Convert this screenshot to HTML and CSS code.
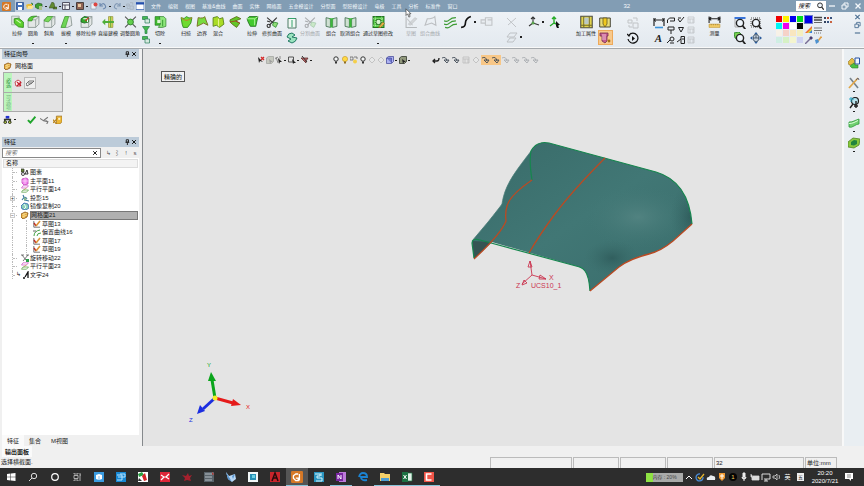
FILE: index.html
```html
<!DOCTYPE html>
<html lang="zh-CN">
<head>
<meta charset="utf-8">
<title>32</title>
<link rel="stylesheet" href="styles.css">
</head>
<body>
<svg class="defs" aria-hidden="true">
  <symbol id="cube" viewBox="0 0 12 12"><path d="M1 4l3-3h7v7l-3 3H1z" fill="#e3e7e6" stroke="#7c8a86" stroke-width=".7"/><path d="M1 4h7v7M8 4l3-3" fill="none" stroke="#7c8a86" stroke-width=".6"/></symbol>
  <symbol id="extrude" viewBox="0 0 12 12"><path d="M.6.6h7v8h-7z" fill="#dfe5e2" stroke="#93a39b" stroke-width=".7"/><path d="M3 3l4-.5L11.4 6v5L7 10.5 3 7z" fill="#5fd12f" stroke="#2c8b1b" stroke-width=".8"/><path d="M5 4l4 3" stroke="#d6ffc0"/></symbol>
  <symbol id="fillet" viewBox="0 0 12 12"><use href="#cube"/><path d="M1 5q0-4 5-4.400l3 0Q5 1 4.500 5z" fill="#57cd38" stroke="#2c8b1b" stroke-width=".6"/></symbol>
  <symbol id="chamfer" viewBox="0 0 12 12"><use href="#cube"/><path d="M1 5l3-4h5L5 6z" fill="#7ad85c" stroke="#3a9a2a" stroke-width=".6"/></symbol>
  <symbol id="draft" viewBox="0 0 12 12"><path d="M5 1h5l1 8-4 2H1z" fill="#e3e7e6" stroke="#7c8a86" stroke-width=".7"/><path d="M4.500 1H8L5 11H1z" fill="#6fd557" stroke="#3a9a2a" stroke-width=".6"/></symbol>
  <symbol id="remove" viewBox="0 0 12 12"><use href="#cube"/><path d="M1 3l3-2 4 1v4L4 7 1 6z" fill="#34a82c" stroke="#175f17" stroke-width=".7"/><path d="M3 3h4v3" stroke="#fff" fill="none"/><path d="M5 5l3-3" stroke="#cf2d23"/></symbol>
  <symbol id="direct" viewBox="0 0 12 12"><path d="M6 1h4v10H6z" fill="#d9d85a" stroke="#8c8b35" stroke-width=".6"/><path d="M0 6l3-3v2h8v2H3v2z" fill="#4fae39"/><path d="M8 1v10" stroke="#55a33a" stroke-width=".8"/></symbol>
  <symbol id="adjust" viewBox="0 0 12 12"><path d="M1 1l3 3M11 1L8 4M1 11l3-3M11 11L8 8" stroke="#555" stroke-width="1"/><circle cx="6" cy="6" r="2.700" fill="#63d04d" stroke="#2c7a28" stroke-width=".8"/></symbol>
  <symbol id="mini" viewBox="0 0 8 8"><path d="M.5.5h5v3h-5z" fill="#48b853" stroke="#238047" stroke-width=".7"/><path d="M3 3h4.500v4H3z" fill="#d5e9df" stroke="#287e5a" stroke-width=".7"/></symbol>
  <symbol id="funnel" viewBox="0 0 8 8"><path d="M.5.5h7L5 4v3.500H3V4z" fill="#45ba50" stroke="#238047" stroke-width=".7"/></symbol>
  <symbol id="cut" viewBox="0 0 12 12"><path d="M1 1h4l2 1v4l-2 3H1z" fill="#3fb92e" stroke="#247623" stroke-width=".6"/><path d="M5 1h4l2 2v7L8 11H4l2-3z" fill="#8ee67c" stroke="#247623" stroke-width=".6"/><path d="M3 4h3v3H3z" fill="#ddf4d6"/><path d="M8 4v6" stroke="#2c932a" stroke-width=".8"/></symbol>
  <symbol id="sweep" viewBox="0 0 12 12"><path d="M1 2q3 2 5-1 2 2 5 1l-1 5-3 4H3L2 8z" fill="#6edb30" stroke="#2c8b1b" stroke-width=".8"/><path d="M1 2q5 5 10 0" fill="none" stroke="#b58a2a"/></symbol>
  <symbol id="bound" viewBox="0 0 12 12"><path d="M2 2q5 1 6-1l3 8-4-2-6 3z" fill="#78dc3f" stroke="#7b7428" stroke-width=".9"/></symbol>
  <symbol id="blend" viewBox="0 0 12 12"><path d="M1 2l4-1 2 2 3-1 1 6-4 3-3-2-3 1z" fill="#a9dc25" stroke="#567e1c" stroke-width=".8"/><path d="M6 3v7" stroke="#e9f48b"/></symbol>
  <symbol id="ribbon" viewBox="0 0 12 12"><path d="M1 4l6-3 4 2-5 2 4 2-3 4-4-3L1 6z" fill="#63c628" stroke="#5c6d1a" stroke-width=".8"/><path d="M1 6l5-1 4 2" stroke="#b32d1d" stroke-width=".7" fill="none"/></symbol>
  <symbol id="bucket" viewBox="0 0 12 12"><path d="M1 3l2-2h8l-2 9H4L2 6z" fill="#43ca2e" stroke="#23731e" stroke-width=".8"/><path d="M1 3h7l3-2M8 3v6" stroke="#bdf8a8" fill="none" stroke-width=".8"/></symbol>
  <symbol id="scissors" viewBox="0 0 12 12"><path d="M1 2l7 6M10 2L3 9M1 5l3 1" stroke="#333" fill="none"/><circle cx="2.500" cy="9.500" r="1.500" fill="none" stroke="#333"/><path d="M7 6l4 1-2 4-3-2z" fill="#8edc77" stroke="#26862b" stroke-width=".7"/></symbol>
  <symbol id="book" viewBox="0 0 12 12"><path d="M1 2l4 1v8l-4-1zM11 2L7 3v8l4-1z" fill="#cfe0d3" stroke="#467153" stroke-width=".8"/><path d="M4 3h1.500v8M8 3H6.500v8" fill="none" stroke="#3cb83b"/></symbol>
  <symbol id="sheet" viewBox="0 0 12 12"><path d="M2 1.500h8v9.500H2z" fill="#f1f8f4" stroke="#4d7b65"/><path d="M3 1.500h6M6 3v7" stroke="#34a46a"/></symbol>
  <symbol id="swirl" viewBox="0 0 12 12"><path d="M1 5q1-4 5-4l3 2-3 2 5 1q-1 4-5 5L2 9l3-2z" fill="#9be4c0" stroke="#237a64"/></symbol>
  <symbol id="modify" viewBox="0 0 12 12"><path d="M1 1h10v10H1z" fill="#55cf42" stroke="#21741f"/><circle cx="6" cy="6" r="2.500" fill="#d9f3cf" stroke="#23751d"/><path d="M3 1v10M9 1v10M1 3h10M1 9h10" stroke="#e8ffe0" stroke-width=".6" stroke-dasharray="1"/><path d="M6 11l4-5 1.500 1.500L8 11z" fill="#e9b445" stroke="#885c20" stroke-width=".5"/></symbol>
  <symbol id="sketch" viewBox="0 0 12 12"><path d="M1 1v10h10" fill="none" stroke="#555"/><path d="M3 8l6-6 2 1-6 6z" fill="#aaa" stroke="#555" stroke-width=".5"/><path d="M2 3l5 6" stroke="#777"/></symbol>
  <symbol id="outline" viewBox="0 0 12 12"><path d="M1 9l2-6q5 0 7-2l1 8-4-2z" fill="none" stroke="#666"/></symbol>
  <symbol id="strokes" viewBox="0 0 12 12"><path d="M0 5q3 1 5-1t6-2M0 8q3 1 5-1t6-2M1 11q3 1 5-1t6-2" fill="none" stroke="#3d9b34" stroke-width="1.100"/></symbol>
  <symbol id="scurve" viewBox="0 0 12 12"><path d="M1 11q4 0 4-4t5-6" fill="none" stroke="#111" stroke-width="1.500"/></symbol>
  <symbol id="boxes" viewBox="0 0 12 12"><path d="M1 4h4v3H1zM5 2h6v7H5zM7 4h4" fill="#e7eaed" stroke="#777"/></symbol>
  <symbol id="axis" viewBox="0 0 12 12"><path d="M5 1v6l-4 3M5 7l6 2M3 3l2-2 2 2" fill="none" stroke="#333" stroke-width="1.100"/><circle cx="5" cy="7" r="1.500" fill="#59a34c"/></symbol>
  <symbol id="axisgo" viewBox="0 0 12 12"><path d="M5 1v6l-4 3M5 7l5 2M3 3l2-2 2 2" fill="none" stroke="#27aa28" stroke-width="1.400"/><path d="M7 5l4 4H9l1 3-2 0-1-2z" fill="#111"/></symbol>
  <symbol id="cross" viewBox="0 0 12 12"><path d="M1 2l9 9M10 2L2 9" stroke="#777"/></symbol>
  <symbol id="planes" viewBox="0 0 12 12"><path d="M4 2h7L8 6H1zM4 7h6l-3 4H1z" fill="none" stroke="#777"/></symbol>
  <symbol id="stock" viewBox="0 0 12 12"><path d="M.7.700h10.600v10.600H.7z" fill="#e1d34c" stroke="#4d4d42"/><path d="M3.500 1v10M8.500 1v10M1 9h10" stroke="#716a2b"/><path d="M4 2h4v6H4z" fill="#bac8c5"/></symbol>
  <symbol id="mill" viewBox="0 0 12 12"><path d="M.7 1h10.600v9H.7z" fill="#e7dc78" stroke="#4a493c"/><path d="M4 1h4v6L6 10 4 7z" fill="#f0c91e" stroke="#665820" stroke-width=".8"/></symbol>
  <symbol id="drill" viewBox="0 0 12 12"><path d="M1 1h8v3H8v5l-2 2-3-2V4H1z" fill="#c55b8d" stroke="#743151" stroke-width=".8"/><path d="M4 2v6M6 2v6" stroke="#f3bfd6"/><circle cx="10" cy="9" r="1.400" fill="#a76e13"/></symbol>
  <symbol id="history" viewBox="0 0 12 12"><path d="M2 3a5 5 0 1 1-1 4M0 2l2 2 2-3" fill="none" stroke="#111" stroke-width="1.200"/><path d="M5 4l3 2.500L5 9z" fill="#111"/></symbol>
  <symbol id="replace" viewBox="0 0 12 12"><path d="M1 3h4v3H1zM6 6h5v5H6zM6 1h4v3M2 8v2h3" fill="none" stroke="#777"/></symbol>
  <symbol id="dim" viewBox="0 0 12 12"><path d="M1 1v8M11 1v8" stroke="#222" stroke-width="1.200"/><path d="M1 3h10M3 1.500L1 3l2 1.500M9 1.500L11 3 9 4.500" fill="none" stroke="#222"/><path d="M2 10.500h8" stroke="#3c94db" stroke-width="1.600"/></symbol>
  <symbol id="measure" viewBox="0 0 12 12"><path d="M1 1v6M11 1v6M1 3h10M3 1.500L1 3l2 1.500M9 1.500L11 3 9 4.500" fill="none" stroke="#222"/><path d="M1 8h10v3H1z" fill="#f3cc68" stroke="#b88b20" stroke-width=".5"/><path d="M3 8v1M5 8v1M7 8v1M9 8v1" stroke="#876519" stroke-width=".5"/></symbol>
  <symbol id="note" viewBox="0 0 8 8"><path d="M.5 7V4l2-2h5v3H3" fill="none" stroke="#222"/></symbol>
  <symbol id="check" viewBox="0 0 8 8"><path d="M1 3l2 3 4-5M1 2h3" fill="none" stroke="#222"/></symbol>
  <symbol id="balloon" viewBox="0 0 8 8"><path d="M1 1h6v3H1zM4 4v4" fill="none" stroke="#222"/></symbol>
  <symbol id="tri" viewBox="0 0 8 8"><path d="M1.500 1.500h5L4 6z" fill="none" stroke="#222"/></symbol>
  <symbol id="leader" viewBox="0 0 8 8"><circle cx="5" cy="3" r="2" fill="none" stroke="#222"/><path d="M0 7l3-3M3 7h4" stroke="#222"/></symbol>
  <symbol id="tag" viewBox="0 0 8 8"><path d="M4 .5h3.500v7H4zM0 6l4-3M5 3h2" fill="none" stroke="#222"/></symbol>
  <symbol id="grid" viewBox="0 0 8 8"><path d="M1 1h6v6H1zM1 3h6M3 3v4M6 3v4" fill="none" stroke="#777" stroke-width=".8"/></symbol>
  <symbol id="lens" viewBox="0 0 12 12"><circle cx="6" cy="5" r="3.600" fill="#eef5fc" stroke="#222" stroke-width="1.400"/><path d="M8.500 7.500l3 4" stroke="#222" stroke-width="1.800"/></symbol>
  <symbol id="zoomfit" viewBox="0 0 12 12"><path d="M.5 1h11" stroke="#2566d6" stroke-width="1.800"/><path d="M1 2v8h4" fill="none" stroke="#aaa"/><use href="#lens" y="1"/></symbol>
  <symbol id="zoomwin" viewBox="0 0 12 12"><path d="M1 1h9v9H1z" fill="none" stroke="#555" stroke-dasharray="1"/><use href="#lens" y="1"/></symbol>
  <symbol id="zoomgreen" viewBox="0 0 12 12"><path d="M0 1l5-1 3 3-2 5-5-2z" fill="#7cd153" stroke="#369331"/><use href="#lens" y="1"/></symbol>
  <symbol id="pan" viewBox="0 0 12 12"><path d="M6 0l2 2.500H4zM6 12l2-2.500H4zM0 6l2.500-2v4zM12 6L9.500 4v4z" fill="#285a9b"/><rect x="3.500" y="2.500" width="5" height="7" rx="2" fill="#c5d0dc" stroke="#34475b" stroke-width=".8"/><path d="M6 3v3M4 6h4" stroke="#34475b" stroke-width=".8"/></symbol>
  <symbol id="lines" viewBox="0 0 8 8"><path d="M0 1.500h8M0 4h8" stroke="#444" stroke-width="1.500"/><path d="M0 6.500h8" stroke="#666"/></symbol>
  <symbol id="dashes" viewBox="0 0 8 8"><path d="M0 2h8M0 4.500h8" stroke="#777"/><path d="M0 7h8" stroke="#777" stroke-dasharray="1"/></symbol>
  <symbol id="brush" viewBox="0 0 8 8"><path d="M7.500.5L4 5" stroke="#e2a045" stroke-width="1.600"/><path d="M1 4l3-1 1 3-3 2z" fill="#4c91cf"/></symbol>
  <symbol id="colors" viewBox="0 0 8 8"><path d="M0 1h2v2H0zM0 5h2v2H0z" fill="#33435f"/><path d="M3 1h2v2H3z" fill="#b94a33"/><path d="M6 1h2v2H6z" fill="#39527d"/><path d="M3 5h2v2H3z" fill="#39527d"/><path d="M6 5h2v2H6z" fill="#c86442"/></symbol>
  <symbol id="rainbow" viewBox="0 0 8 8"><path d="M0 7L7 0v7z" fill="#ed6b37"/><path d="M2 7l5-5v5z" fill="#e7d43b"/><path d="M4 7l3-3v3z" fill="#3884de"/></symbol>
  <symbol id="pick" viewBox="0 0 8 8"><path d="M0 8l5-5" stroke="#776c94" stroke-width="1.400"/><path d="M4 2l2-2 2 2-2 2z" fill="#4a3e70"/></symbol>
  <symbol id="logo" viewBox="0 0 10 10"><rect width="10" height="10" rx="1" fill="#d57826"/><path d="M6 2.500H4L2 4v2l2 2h2V6H4M7 2.500V8" fill="none" stroke="#fff" stroke-width="1.100"/></symbol>
  <symbol id="save" viewBox="0 0 8 8"><path d="M.5.500h7v7h-7z" fill="#4573bc" stroke="#234786" stroke-width=".7"/><path d="M2 1h4v2H2zM2 5h4v3H2z" fill="#fff"/></symbol>
  <symbol id="open" viewBox="0 0 8 8"><path d="M0 3l2-1h4v5H1z" fill="#eabc3d"/><path d="M2 4h6L6 7H1z" fill="#ffe38b"/><path d="M5 1l2 1-1 1" stroke="#377e34" fill="none"/></symbol>
  <symbol id="part" viewBox="0 0 8 8"><path d="M0 3l3-2 4 1v3L3 7 0 5z" fill="#3e9f2f" stroke="#254d20" stroke-width=".6"/><path d="M4 4h3v4H4z" fill="#aac28c"/></symbol>
  <symbol id="cone" viewBox="0 0 8 8"><path d="M3 0l2 1 1 5H0zM5 5h3v2H4z" fill="#618a31" stroke="#34491e" stroke-width=".5"/></symbol>
  <symbol id="sheetmini" viewBox="0 0 8 8"><path d="M.5.500h7v7h-7zM.5 3h7M3 3v4" fill="#eef2f5" stroke="#445" stroke-width=".9"/></symbol>
  <symbol id="machine" viewBox="0 0 8 8"><path d="M.5.500h7v7h-7z" fill="#8f6354" stroke="#49413f"/><path d="M2 2h3v3H2z" fill="#e8c9a0"/></symbol>
  <symbol id="undo" viewBox="0 0 8 8"><path d="M1 1v3h3M1 4q3-4 5-1t-2 4" fill="none" stroke="#6d89ae" stroke-width="1.200"/></symbol>
  <symbol id="redo" viewBox="0 0 8 8"><path d="M7 1v3H4M7 4Q4 0 2 3t2 4" fill="none" stroke="#8299b5" stroke-width="1.200"/></symbol>
  <symbol id="docred" viewBox="0 0 8 8"><path d="M1 1h5v6H1z" fill="#edf1f5" stroke="#8796a8" stroke-width=".6"/><circle cx="5.500" cy="2.500" r="2" fill="#dd4440"/></symbol>
  <symbol id="window" viewBox="0 0 8 8"><path d="M0 .5h8v7H0z" fill="#fff" stroke="#2e5bae" stroke-width=".7"/><path d="M0 1.500h8" stroke="#234ead" stroke-width="2"/></symbol>
  <symbol id="min" viewBox="0 0 8 8"><path d="M1 4h6" stroke="currentColor" stroke-width="1.300"/></symbol>
  <symbol id="restore" viewBox="0 0 8 8"><path d="M1 3h4v4H1zM3 3V1h4v4H5" fill="none" stroke="currentColor"/></symbol>
  <symbol id="x" viewBox="0 0 8 8"><path d="M1.500 1.500l5 5M6.500 1.500l-5 5" stroke="currentColor" stroke-width="1.300"/></symbol>
  <symbol id="pin" viewBox="0 0 8 8"><path d="M3 1h3v3H3zM2 4.500h5M4.500 5v3" fill="none" stroke="#222" stroke-width="1.300"/></symbol>
  <symbol id="mesh" viewBox="0 0 8 8"><path d="M0 3l4-2 3 1-1 4-4 2-2-2z" fill="#e2a539" stroke="#8c5818" stroke-width=".8"/><path d="M1 4l5-2M1 6l5-2M3 2v5" stroke="#fff0ac" stroke-width=".6"/></symbol>
  <symbol id="redmesh" viewBox="0 0 8 8"><path d="M1 3l3-2 3 2-1 4H2z" fill="#fff" stroke="#b8252f" stroke-width=".8"/><path d="M3 3l4 4M7 3L3 7" stroke="#c5202f" stroke-width="1.200"/></symbol>
  <symbol id="face" viewBox="0 0 8 8"><path d="M0 5l3-3h5L6 4 1 7z" fill="#eee" stroke="#555" stroke-width=".8"/><path d="M2 4h4" stroke="#555" stroke-width=".8"/></symbol>
  <symbol id="bino" viewBox="0 0 10 10"><path d="M3 1h4v3H3z" fill="#2432cf"/><path d="M1 5h8M2 5v3M8 5v3" stroke="#30352a" stroke-width="1.500"/><circle cx="2.500" cy="8" r="1.500" fill="#b7cf44" stroke="#222"/><circle cx="7.500" cy="8" r="1.500" fill="#b7cf44" stroke="#222"/></symbol>
  <symbol id="ok" viewBox="0 0 8 8"><path d="M.8 4.500L3 6.700 7.500 1.500" fill="none" stroke="#20a52c" stroke-width="1.700"/></symbol>
  <symbol id="branch" viewBox="0 0 8 8"><path d="M0 3l3 2 4-3M3 5l4 1M5 5l2 1-1 2" fill="none" stroke="#777"/></symbol>
  <symbol id="exit" viewBox="0 0 8 8"><path d="M3 1h5v5l-2 2H3z" fill="#eeb835" stroke="#9f721d" stroke-width=".7"/><path d="M0 4l3 4M4 3L0 7" stroke="#b98218"/><circle cx="5.500" cy="3.500" r="1" fill="#fff3c4"/></symbol>
  <symbol id="set" viewBox="0 0 8 8"><path d="M0 1h3v3H0z" fill="#658330" stroke="#333" stroke-width=".7"/><circle cx="2" cy="6" r="1.500" fill="#fff" stroke="#222" stroke-width=".8"/><path d="M4 6l2-4 1 4H4" fill="none" stroke="#222" stroke-width=".9"/></symbol>
  <symbol id="toggle" viewBox="0 0 8 8"><path d="M0 1h3v3H0zM4 1h3v2" fill="none" stroke="#666" stroke-width=".8"/><circle cx="5" cy="5.500" r="2" fill="#f4cf4a"/></symbol>
  <symbol id="pink" viewBox="0 0 8 8"><path d="M1 2l4-1 2 1v5l-4 1-2-2z" fill="#f189ed" stroke="#c440bd" stroke-width=".8"/><path d="M1 4h6M4 1v6" stroke="#ffe2ff" stroke-width=".6"/></symbol>
  <symbol id="parallel" viewBox="0 0 8 8"><path d="M2 .8h5.500L5.500 3H.5z" fill="none" stroke="#d25fcb" stroke-width=".8"/><path d="M5.500 3l-3 2" stroke="#c9a34d" stroke-width=".8"/><path d="M2 5h5.500l-2 2.200h-5z" fill="none" stroke="#61a44f" stroke-width=".8"/></symbol>
  <symbol id="project" viewBox="0 0 8 8"><path d="M2 1l2 5 4 1M1 6q3-5 5-1" fill="none" stroke="#38789e" stroke-width="1.100"/><path d="M3 3l3 2-3 2z" fill="#84b48b"/></symbol>
  <symbol id="mirror" viewBox="0 0 8 8"><path d="M0 4l3-3 4 1 1 4-3 2-4-1z" fill="#8ad0b8" stroke="#2862b1" stroke-width=".8"/><path d="M3 2l2 3-2 2" stroke="#f0fbff" fill="none"/></symbol>
  <symbol id="skt" viewBox="0 0 8 8"><path d="M.8 1v6.200H7" fill="none" stroke="#555" stroke-width=".8"/><path d="M1 3l2 3" stroke="#bd2f25" stroke-width="1.400"/><path d="M3 6l4-5" stroke="#dc9437" stroke-width="1.600"/></symbol>
  <symbol id="offset" viewBox="0 0 8 8"><path d="M1 8q0-5 6-6M4 8q0-3 4-3" fill="none" stroke="#43a246"/><path d="M0 3h3" stroke="#666"/></symbol>
  <symbol id="rotate" viewBox="0 0 8 8"><path d="M0 1h3M1 1l4 5M7 1L2 7M5 1h3" stroke="#555" stroke-width=".8"/><path d="M5 5h3v3H5z" fill="#289d48"/></symbol>
  <symbol id="text" viewBox="0 0 8 8"><path d="M2 7h2M7 7V1L4 6" fill="none" stroke="#111" stroke-width="1.300"/></symbol>
  <symbol id="pick2" viewBox="0 0 8 8"><path d="M1 1l1 6 1-2 3 1z" fill="#222"/><path d="M4 1l3 3M7 1L4 4" stroke="#d62828" stroke-width="1.300"/></symbol>
  <symbol id="chain" viewBox="0 0 8 8"><path d="M0 3l3-2M1 1l2 6M5 0v3" stroke="#888" fill="none"/><path d="M3 2l4 4H5L4 8z" fill="#222"/></symbol>
  <symbol id="select" viewBox="0 0 8 8"><path d="M.5 1h5v5h-5z" fill="none" stroke="#444" stroke-width=".9"/><path d="M4 3l4 4H6l-1 1z" fill="#222"/></symbol>
  <symbol id="filter" viewBox="0 0 8 8"><path d="M0 2h7L5 5v2L3 5z" fill="#b66" stroke="#522" stroke-width=".7"/><path d="M1 0l5 6" stroke="#333"/></symbol>
  <symbol id="bulb" viewBox="0 0 8 8"><circle cx="4" cy="3" r="2.200" fill="#f3f5f5" stroke="#333"/><path d="M3 5.500h2v2H3z" fill="#333"/></symbol>
  <symbol id="bulbon" viewBox="0 0 8 8"><circle cx="4" cy="3" r="2.600" fill="#ffda45" stroke="#c49421" stroke-width=".6"/><path d="M3 5.500h2v2H3z" fill="#906f23"/></symbol>
  <symbol id="purplecube" viewBox="0 0 8 8"><path d="M.5 2l2-1.500h5v5l-2 2h-5z" fill="#aeb3f1" stroke="#3b3f93" stroke-width=".7"/><path d="M.5 2h5v5" fill="#7077cf" stroke="#3b3f93" stroke-width=".6"/></symbol>
  <symbol id="graycube" viewBox="0 0 8 8"><path d="M.5 2l2-1.500h5v5l-2 2h-5z" fill="#91987c" stroke="#32382d" stroke-width=".8"/><path d="M3 3l4 3H5L4 8z" fill="#222"/></symbol>
  <symbol id="back" viewBox="0 0 8 8"><path d="M1 5h4q2 0 2-3M3 3L1 5l2 2" fill="none" stroke="#222" stroke-width="1.300"/></symbol>
  <symbol id="snap" viewBox="0 0 8 8"><path d="M0 2q4-2 5 3M2 4h5L5 7z" fill="none" stroke="#3f4955" stroke-width=".9"/></symbol>
  <symbol id="diamond" viewBox="0 0 8 8"><path d="M4 1l3 3-3 3-3-3z" fill="#eef0f1" stroke="#888"/></symbol>
  <symbol id="home" viewBox="0 0 12 12"><path d="M0 5l4-4 3 3v4H1z" fill="#e0bd45" stroke="#937120" stroke-width=".6"/><path d="M7 1h4.500v6H7z" fill="#edf4ff" stroke="#2752a2"/><path d="M2 9l4-3 1 2h3v3H4z" fill="#4ac044" stroke="#2c812b" stroke-width=".6"/></symbol>
  <symbol id="tools" viewBox="0 0 12 12"><path d="M2 1l8 10" stroke="#76828b" stroke-width="1.600"/><path d="M10 1L1 11" stroke="#e0a64a" stroke-width="1.800"/><path d="M8 3l2-2 1 2" stroke="#667" fill="none"/></symbol>
  <symbol id="inspect" viewBox="0 0 12 12"><circle cx="7" cy="4" r="3.500" fill="#b8e4ef" stroke="#222" stroke-width="1.200"/><path d="M5 7l-3 4M8 4v7M6 9h4" stroke="#222" stroke-width="1.400"/><path d="M1 2h5M3 0v5" stroke="#2eabc9"/></symbol>
  <symbol id="slab" viewBox="0 0 12 12"><path d="M1 5q3 0 5-1t5-2v5q-2 0-5 2t-5 1z" fill="#70cf71" stroke="#2f9d3a" stroke-width=".8"/><path d="M1 6.500q3 0 5-1t4-2" fill="none" stroke="#dbffd9"/></symbol>
  <symbol id="slab2" viewBox="0 0 12 12"><path d="M0 5l5-4 7 1-1 6-5 3-6-1z" fill="#88c83d" stroke="#4f8424" stroke-width=".8"/><path d="M3 5l3-2 3 .5V7L6 8.500 3 8z" fill="#20843d"/></symbol>
</svg>

<header class="titlebar">
  <svg class="logo"><use href="#logo"/></svg>
  <div class="quick">
    <button aria-label="保存"><svg><use href="#save"/></svg></button><button aria-label="打开"><svg><use href="#open"/></svg></button>
    <button class="more" aria-label="零件"><svg><use href="#part"/></svg></button><button class="more" aria-label="装配"><svg><use href="#cone"/></svg></button>
    <button class="more" aria-label="工程图"><svg><use href="#sheetmini"/></svg></button><button class="more" aria-label="加工"><svg><use href="#machine"/></svg></button>
    <button aria-label="关闭文件"><svg><use href="#docred"/></svg></button><button class="more" aria-label="撤销"><svg><use href="#undo"/></svg></button>
    <button class="more" aria-label="重做"><svg><use href="#redo"/></svg></button><button aria-label="复制"><svg class="off"><use href="#replace"/></svg></button><button aria-label="窗口布局"><svg><use href="#window"/></svg></button>
  </div>
  <nav class="menu"><button>文件</button><button>编辑</button><button>视图</button><button>基准&amp;曲线</button><button>曲面</button><button>实体</button><button>网格面</button><button>五金模设计</button><button>分型面</button><button>型腔模设计</button><button>电极</button><button>工具</button><button class="hover">分析<svg class="cursor" viewBox="0 0 8 12"><path d="M1 1v8l2-2 1.500 4 1.500-1-1.500-3H7z" fill="#fff" stroke="#333" stroke-width=".8"/></svg></button><button>标准件</button><button>窗口</button></nav>
  <div class="doc">32</div>
  <label class="find"><input type="text" value="搜索" aria-label="搜索"><svg><use href="#lens"/></svg></label>
  <div class="winbtns"><button aria-label="最小化"><svg><use href="#min"/></svg></button><button aria-label="还原"><svg><use href="#restore"/></svg></button><button aria-label="关闭"><svg><use href="#x"/></svg></button></div>
</header>

<div class="ribbon">
  <section class="group g1"><i class="grip"></i>
    <button class="tool"><svg><use href="#extrude"/></svg>拉伸</button>
    <button class="tool drop"><svg><use href="#fillet"/></svg>圆角</button>
    <button class="tool"><svg><use href="#chamfer"/></svg>斜角</button>
    <button class="tool drop"><svg><use href="#draft"/></svg>拔模</button>
    <button class="tool"><svg><use href="#remove"/></svg>移除拉伸</button>
    <button class="tool"><svg><use href="#direct"/></svg>直接建模</button>
    <button class="tool"><svg><use href="#adjust"/></svg>调整圆角</button>
    <div class="stack mini"><button aria-label="合并"><svg><use href="#mini"/></svg></button><button aria-label="过滤"><svg><use href="#funnel"/></svg></button><button aria-label="复制实体"><svg><use href="#mini"/></svg></button></div>
    <button class="tool drop"><svg><use href="#cut"/></svg>切除</button>
  </section>
  <section class="group g2"><i class="grip"></i>
    <button class="tool"><svg><use href="#sweep"/></svg>扫掠</button>
    <button class="tool"><svg><use href="#bound"/></svg>边界</button>
    <button class="tool"><svg><use href="#blend"/></svg>混合</button>
    <button class="tool" aria-label="曲面"><svg><use href="#ribbon"/></svg></button>
    <button class="tool"><svg><use href="#bucket"/></svg>拉伸</button>
    <button class="tool"><svg><use href="#scissors"/></svg>修剪曲面</button>
    <div class="stack"><button aria-label="平面"><svg><use href="#sheet"/></svg></button><button aria-label="延伸"><svg><use href="#swirl"/></svg></button></div>
    <button class="tool off"><svg><use href="#scissors"/></svg>分割曲面</button>
    <button class="tool"><svg><use href="#book"/></svg>组合</button>
    <button class="tool"><svg><use href="#book"/></svg>取消组合</button>
    <button class="tool drop"><svg><use href="#modify"/></svg>通过草图修改</button>
  </section>
  <section class="group g3"><i class="grip"></i>
    <button class="tool off"><svg><use href="#sketch"/></svg>草图</button>
    <button class="tool off"><svg><use href="#outline"/></svg>组合曲线</button>
    <button class="tool" aria-label="曲线"><svg><use href="#strokes"/></svg></button>
    <button class="tool" aria-label="样条"><svg><use href="#scurve"/></svg></button><i class="dot"></i>
    <button class="tool off" aria-label="偏移"><svg><use href="#boxes"/></svg></button>
  </section>
  <section class="group g4 rows"><i class="grip"></i>
    <button class="cell off" aria-label="点"><svg><use href="#cross"/></svg></button><i></i>
    <button class="cell" aria-label="坐标系"><svg><use href="#axis"/></svg></button><i class="dot"></i>
    <button class="cell" aria-label="激活坐标系"><svg><use href="#axisgo"/></svg></button>
    <button class="cell low off" aria-label="平面"><svg><use href="#planes"/></svg></button><i class="dot"></i>
  </section>
  <section class="group g5"><i class="grip"></i>
    <button class="tool"><svg><use href="#stock"/></svg>加工属性</button>
    <div class="stack"><button aria-label="刀具"><svg><use href="#mill"/></svg></button><button class="active" aria-label="钻孔"><svg><use href="#drill"/></svg></button></div>
  </section>
  <section class="group g6"><i class="grip"></i>
    <div class="stack"><button class="off" aria-label="替换"><svg><use href="#replace"/></svg></button><button aria-label="历史"><svg><use href="#history"/></svg></button></div>
  </section>
  <section class="group g7"><i class="grip"></i>
    <div class="stack"><button aria-label="尺寸"><svg><use href="#dim"/></svg></button><button class="letter">A</button></div>
    <div class="stack mini"><button aria-label="注释"><svg><use href="#note"/></svg></button><button aria-label="气泡"><svg><use href="#balloon"/></svg></button><button aria-label="引线"><svg><use href="#leader"/></svg></button></div>
    <div class="stack mini"><button aria-label="粗糙度"><svg><use href="#check"/></svg></button><button aria-label="基准"><svg><use href="#tri"/></svg></button><button aria-label="标签"><svg><use href="#tag"/></svg></button></div>
    <div class="stack mini off"><button aria-label="表格"><svg><use href="#grid"/></svg></button><button aria-label="编辑表格"><svg><use href="#grid"/></svg></button><button aria-label="孔表"><svg><use href="#grid"/></svg></button></div>
  </section>
  <section class="group g8"><i class="grip"></i>
    <button class="tool"><svg><use href="#measure"/></svg>测量</button>
  </section>
  <section class="group g9"><i class="grip"></i>
    <div class="stack"><button aria-label="全部缩放"><svg><use href="#zoomfit"/></svg></button><button aria-label="缩放实体"><svg><use href="#zoomgreen"/></svg></button></div>
    <div class="stack"><button aria-label="窗口缩放"><svg><use href="#zoomwin"/></svg></button><button aria-label="平移"><svg><use href="#pan"/></svg></button></div>
  </section>
  <section class="group g10"><i class="grip"></i>
    <div class="swatches"><i class="c1"></i><i class="c2"></i><i class="c3"></i><i class="c4"></i><i class="c5"></i><i class="c6"></i><i class="c7"></i><i class="c8"></i><i class="c9"></i><i class="c10"></i><i class="c11"></i><i class="c12"></i><i class="c13"></i><i class="c14"></i><i class="c15"></i><i class="c16"></i></div>
    <div class="stack mini"><button class="current" aria-label="当前颜色"></button><button aria-label="更多颜色"><svg><use href="#rainbow"/></svg></button><button aria-label="吸管"><svg><use href="#pick"/></svg></button></div>
    <div class="stack mini"><button aria-label="线宽"><svg><use href="#lines"/></svg></button><button aria-label="线型"><svg><use href="#dashes"/></svg></button><button aria-label="格式刷"><svg><use href="#brush"/></svg></button></div>
    <div class="stack mini"><button aria-label="颜色表"><svg><use href="#colors"/></svg></button></div>
  </section>
  <div class="docbtns"><button aria-label="关闭文档"><svg><use href="#x"/></svg></button><button aria-label="还原文档"><svg><use href="#restore"/></svg></button><button aria-label="最小化文档"><svg><use href="#min"/></svg></button></div>
</div>

<main class="work">
  <aside class="side">
    <section class="wizard">
      <h2>特征向导<svg><use href="#pin"/></svg><svg><use href="#x"/></svg></h2>
      <div class="feature"><svg><use href="#mesh"/></svg>网格面</div>
      <div class="steps">
        <div class="step"><b>必选</b><button aria-label="曲线"><svg><use href="#redmesh"/></svg></button><button class="on" aria-label="截面"><svg><use href="#face"/></svg></button></div>
        <div class="step dim"><b>可选项</b></div>
      </div>
      <div class="confirm"><button class="more" aria-label="预览"><svg><use href="#bino"/></svg></button><button aria-label="确定"><svg><use href="#ok"/></svg></button><button aria-label="应用"><svg><use href="#branch"/></svg></button><button aria-label="取消"><svg><use href="#exit"/></svg></button></div>
    </section>
    <section class="features">
      <h2>特征<svg><use href="#pin"/></svg><svg><use href="#x"/></svg></h2>
      <div class="search"><label><input type="text" placeholder="搜索" aria-label="搜索特征"><svg><use href="#x"/></svg></label><button>↳</button><button>⌇</button><button>!</button><button>s</button></div>
      <div class="colhead">名称</div>
      <ul class="tree">
        <li><svg><use href="#set"/></svg><span>图素</span></li>
        <li><svg><use href="#pink"/></svg><span>主平面11</span></li>
        <li><svg><use href="#parallel"/></svg><span>平行平面14</span></li>
        <li><i class="exp">+</i><svg><use href="#project"/></svg><span>投影15</span></li>
        <li><svg><use href="#mirror"/></svg><span>镜像复制20</span></li>
        <li class="sel"><i class="exp">−</i><svg><use href="#mesh"/></svg><span>网格面21</span></li>
        <li class="sub"><svg><use href="#skt"/></svg><span>草图13</span></li>
        <li class="sub"><svg><use href="#offset"/></svg><span>偏置曲线16</span></li>
        <li class="sub"><svg><use href="#skt"/></svg><span>草图17</span></li>
        <li class="sub"><svg><use href="#skt"/></svg><span>草图19</span></li>
        <li><svg><use href="#rotate"/></svg><span>旋转移动22</span></li>
        <li><svg><use href="#parallel"/></svg><span>平行平面23</span></li>
        <li class="last"><i class="exp bare">↳</i><svg><use href="#text"/></svg><span>文字24</span></li>
      </ul>
    </section>
    <div class="tabs"><button class="on">特征</button><button>集合</button><button>M视图</button></div>
  </aside>

  <section class="view">
    <svg class="scene" viewBox="143 50 699 397">
      <defs>
        <linearGradient id="skin" x1="0" y1="0" x2="1" y2="1"><stop offset="0" stop-color="#386a68"/><stop offset=".5" stop-color="#417775"/><stop offset="1" stop-color="#396c6b"/></linearGradient>
        <radialGradient id="shine"><stop offset="0" stop-color="#538482" stop-opacity=".9"/><stop offset="1" stop-color="#417775" stop-opacity="0"/></radialGradient>
        <radialGradient id="shade"><stop offset="0" stop-color="#2b5656" stop-opacity=".7"/><stop offset="1" stop-color="#386a68" stop-opacity="0"/></radialGradient>
        <clipPath id="body"><path d="M535 147Q540 142 549 144L656 173C680 180 690 200 692 225L673 242Q661 252 649 255Q629 260 619 268L590 292Q589 277 585 272Q582 268 576 267L492 243L474 260L472 242L488 223Q500 208 502 205C505 185 515 173 535 147z"/></clipPath>
      </defs>
      <g clip-path="url(#body)"><path d="M465 138h235v160H465z" fill="url(#skin)"/><ellipse cx="638" cy="218" rx="55" ry="32" fill="url(#shine)"/><ellipse cx="612" cy="259" rx="28" ry="18" fill="url(#shade)"/><ellipse cx="690" cy="218" rx="20" ry="34" fill="url(#shade)"/><path d="M472 242l20 1-18 18z" fill="#365453"/></g>
      <path d="M472 242L488 223Q500 208 502 205C505 185 515 173 535 147" fill="none" stroke="#477b76" stroke-width=".8"/>
      <path d="M532 181Q529 162 531 152Q535 145 541 144Q544 143 549 144L656 173C680 180 690 200 692 225M590 292Q589 277 585 272Q582 268 576 267L480 241Q472 239 472 244L474 259" fill="none" stroke="#16864e" stroke-width="1.200"/>
      <path d="M605 159Q573 191 555 215Q540 235 529 254M532 181Q510 196 507 207Q505 214 506 222Q501 235 474 260M692 225L673 242Q661 252 649 255Q629 260 619 268L590 292" fill="none" stroke="#bb4a22" stroke-width="1.300"/>
      <path d="M532 276l-2-14M532 276l14 4M532 276l-10 9M530 262l-2 6h4zM546 280l-6-4-1 4zM522 286l2-5 3 3z" fill="none" stroke="#cb3550" stroke-width=".9"/>
      <g class="ucs"><text x="516" y="289">Z</text><text x="549" y="281">X</text><text x="531" y="289">UCS10_1</text></g>
      <path d="M215 399l-3-18" stroke="#0ba51c" stroke-width="3"/><path d="M211 373l5 9h-8z" fill="#0ba51c"/>
      <path d="M215 399l18 5" stroke="#e51b1b" stroke-width="3"/><path d="M241 406l-10 1 2-7z" fill="#e51b1b"/>
      <path d="M215 399l-12 11" stroke="#1c2ee0" stroke-width="3"/><path d="M197 415l3-9 5 6z" fill="#1c2ee0"/><circle cx="215" cy="399" r="2.500" fill="#f4ed28"/>
      <g class="axes"><text x="207" y="368" fill="#0ba51c">Y</text><text x="246" y="410" fill="#e51b1b">X</text><text x="189" y="423" fill="#1c2ee0">Z</text></g>
    </svg>
    <div class="overlay">
      <div class="viewbar">
        <div class="set"><button aria-label="取消选择"><svg><use href="#pick2"/></svg></button><button class="off" aria-label="选择体"><svg><use href="#graycube"/></svg></button><button class="more" aria-label="链选"><svg><use href="#chain"/></svg></button><button class="more" aria-label="框选"><svg><use href="#select"/></svg></button><button class="more" aria-label="过滤器"><svg><use href="#filter"/></svg></button></div>
        <div class="set s2"><button aria-label="隐藏"><svg><use href="#bulb"/></svg></button><button aria-label="显示"><svg><use href="#bulbon"/></svg></button><button aria-label="切换显示"><svg><use href="#toggle"/></svg></button><button aria-label="反向显示"><svg><use href="#bulb"/></svg></button><button class="off" aria-label="上一个"><svg><use href="#diamond"/></svg></button><button class="off" aria-label="下一个"><svg><use href="#diamond"/></svg></button><button class="more" aria-label="着色"><svg><use href="#purplecube"/></svg></button><button class="more" aria-label="视角"><svg><use href="#graycube"/></svg></button></div>
        <div class="set s3"><button aria-label="返回"><svg><use href="#back"/></svg></button><button aria-label="端点"><svg><use href="#snap"/></svg></button><button aria-label="中点"><svg><use href="#snap"/></svg></button><button class="off" aria-label="网格"><svg><use href="#grid"/></svg></button><button class="off" aria-label="圆心"><svg><use href="#diamond"/></svg></button><button class="hot" aria-label="曲线捕捉"><svg><use href="#snap"/></svg></button><button class="hot" aria-label="面捕捉"><svg><use href="#snap"/></svg></button><button class="off" aria-label="交点"><svg><use href="#snap"/></svg></button><button class="off" aria-label="切点"><svg><use href="#snap"/></svg></button><button class="off" aria-label="垂足"><svg><use href="#snap"/></svg></button><button class="more off" aria-label="捕捉"><svg><use href="#snap"/></svg></button></div>
      </div>
      <button class="exact">精确的</button>
    </div>
  </section>

  <aside class="rail"><i class="railgrip"></i>
    <button aria-label="主页"><svg><use href="#home"/></svg></button><button class="drop" aria-label="工具"><svg><use href="#tools"/></svg></button><button class="drop" aria-label="检查"><svg><use href="#inspect"/></svg></button><button class="drop" aria-label="面"><svg><use href="#slab"/></svg></button><button class="drop" aria-label="实体"><svg><use href="#slab2"/></svg></button>
  </aside>
</main>

<div class="output"><button>输出面板</button></div>
<footer class="status"><span class="msg">选择横截面.</span><span></span><span></span><span></span><span></span><span>32</span><span>单位:mm</span></footer>

<div class="taskbar">
  <div class="apps">
    <button aria-label="开始"><svg viewBox="0 0 12 12"><path d="M2 3l3.500-.5v3.200H2zM6 2.400L10.500 2v3.700H6zM2 6.300h3.500v3.200L2 9zM6 6.300h4.500V10L6 9.500z" fill="#fff"/></svg></button>
    <button aria-label="搜索"><svg viewBox="0 0 12 12"><circle cx="7" cy="5" r="2.700" fill="none" stroke="#ddd"/><path d="M5 7l-3 3" stroke="#ddd"/></svg></button>
    <button aria-label="语音助手"><svg viewBox="0 0 12 12"><circle cx="6" cy="6" r="3.300" fill="none" stroke="#fff" stroke-width="1.200"/></svg></button>
    <button aria-label="任务视图"><svg viewBox="0 0 12 12"><path d="M3 4.500h4v3H3zM3 2v1h4V2M3 10V9h4v1M9 2v8M9 4h1" fill="none" stroke="#ccc" stroke-width=".8"/></svg></button>
    <button aria-label="浏览器"><svg viewBox="0 0 12 12"><path d="M1 1h10v10H1z" fill="#3a9be0"/><path d="M3 4l3-1 3 1v4L6 9 3 8z" fill="#fff"/><path d="M6 5v4" stroke="#83c2ef"/></svg></button>
    <button aria-label="绘图"><svg viewBox="0 0 12 12"><path d="M1 1h10v10H1z" fill="#1788d4"/><path d="M2 4h5v5H2M5 3h5v3H7M3 6h4" fill="none" stroke="#b8e4ff"/></svg></button>
    <button aria-label="地图"><svg viewBox="0 0 12 12"><path d="M1 1h10v10H1z" fill="#fff"/><path d="M1 3l4-2 2 3-5 2z" fill="#28a142"/><path d="M5 5l3-3 2 7-3 1z" fill="#d62528"/><path d="M2 7l3 3H1z" fill="#333"/></svg></button>
    <button aria-label="模型"><svg viewBox="0 0 12 12"><path d="M1 1h10v10H1z" fill="#df2638"/><path d="M2 4l3 2-3 3M10 3L7 6l3 2M4 6h4" fill="none" stroke="#fff" stroke-width="1.200"/></svg></button>
    <button aria-label="渲染"><svg viewBox="0 0 12 12"><path d="M1 4l4 1 2-3 1 3 3-1-2 3 1 3-4-1-3 1 1-3z" fill="#a5202d"/></svg></button>
    <button aria-label="列表"><svg viewBox="0 0 12 12"><path d="M1 1h10v10H1z" fill="#59636a"/><path d="M2 3h7M2 6h7M2 9h7" stroke="#b6bec4"/><path d="M9 2h1v2" stroke="#d64b45"/></svg></button>
    <button aria-label="邮件"><svg viewBox="0 0 12 12"><path d="M1 1l3 4 6-2 1 5-4 3-4-3z" fill="#b9d8f5"/><path d="M1 1l6 10-4-3zM7 5l3-2-2 5z" fill="#5996d0"/></svg></button>
    <button aria-label="图片"><svg viewBox="0 0 12 12"><path d="M1 1h10v10H1z" fill="#f2f6f7"/><path d="M3 3h6v6H3z" fill="#278fb5"/><path d="M5 4h3v3H5z" fill="#6ad0e3"/></svg></button>
    <button aria-label="图纸"><svg viewBox="0 0 12 12"><path d="M1 1h10v10H1z" fill="#c9252b"/><path d="M3 10l3-8 3 8M4 7h4" fill="none" stroke="#260b0b" stroke-width="1.500"/></svg></button>
    <button class="run focus" aria-label="三维设计"><svg><use href="#logo"/></svg></button>
    <button aria-label="仿真"><svg viewBox="0 0 12 12"><path d="M1 1h10v10H1z" fill="#2b96c1"/><path d="M2 3h5v2H4v2h5v3H3M8 2v3" fill="none" stroke="#d8f4fb"/></svg></button>
    <button class="run" aria-label="笔记"><svg viewBox="0 0 12 12"><path d="M4 1h7v10H4z" fill="#bd7bd9"/><path d="M1 2h7v8H1z" fill="#7925a0"/><path d="M3 8V4l3 4V4" fill="none" stroke="#fff"/></svg></button>
    <button aria-label="网页"><svg viewBox="0 0 12 12"><path d="M2 6q1-4 4-4 4 0 4 4H4q0 4 6 3" fill="none" stroke="#1b83d2" stroke-width="1.900"/></svg></button>
    <button class="run" aria-label="文件夹"><svg viewBox="0 0 12 12"><path d="M1 2h4l1 1h5v7H1z" fill="#f5d168"/><path d="M2 7h8v3H2z" fill="#4e9ed3"/></svg></button>
    <button class="run" aria-label="表格"><svg viewBox="0 0 12 12"><path d="M5 2h6v8H5z" fill="#e2f1e8" stroke="#207245" stroke-width=".7"/><path d="M1 1l6 0v10H1z" fill="#1d7043"/><path d="M2.500 4l3 4M5.500 4l-3 4" stroke="#fff"/></svg></button>
    <button class="run" aria-label="录屏"><svg viewBox="0 0 12 12"><path d="M1 1h10v10H1z" fill="#ee5548"/><path d="M8.500 3h-5v6h5" fill="none" stroke="#fff" stroke-width="1.600"/></svg></button>
  </div>
  <div class="tray">
    <span class="mem">内存 : 20%</span>
    <svg viewBox="0 0 10 10"><path d="M2 7l3-3 3 3" fill="none" stroke="#fff"/></svg>
    <svg viewBox="0 0 10 10"><path d="M8 5a3.500 3.500 0 1 1-3-3" fill="none" stroke="#4a8cd6" stroke-width="1.300"/><path d="M3 5l2 2 4-5" fill="none" stroke="#e3b42e" stroke-width="1.300"/></svg>
    <svg viewBox="0 0 10 10"><path d="M1 8q-1-3 2-3 1-3 4-1 3 0 2 4z" fill="#e9eef1"/></svg>
    <svg viewBox="0 0 10 10"><path d="M2 1h6v5L5 9 2 6z" fill="#f09a32"/><path d="M5 2v5M3 4h4" stroke="#fff"/></svg>
    <span class="badge">1</span>
    <svg viewBox="0 0 10 10"><path d="M4 1h2v5H4zM3 5q0 2 2 2t2-2M5 7v2" fill="#eee" stroke="#eee"/></svg>
    <svg viewBox="0 0 10 10"><path d="M2 4h7v4H2zM1 2v3h2" fill="#ddd" stroke="#ddd" stroke-width=".8"/></svg>
    <svg viewBox="0 0 10 10"><path d="M1 2h8v5H3M5 7v2M3 9h4M1 2v6" fill="none" stroke="#eee" stroke-width=".9"/></svg>
    <svg viewBox="0 0 10 10"><path d="M1 4h2l2-2v6L3 6H1zM7 3q1 2 0 4" fill="none" stroke="#ccc" stroke-width=".9"/></svg>
    <span class="ime">英</span><span class="ime box">五</span>
    <time class="clock">20:20<br>2020/7/21</time>
    <svg class="chat" viewBox="0 0 10 10"><path d="M1 1h8v6H7v2L5 7H1z" fill="#fff"/><path d="M3 3h4M3 5h4" stroke="#555" stroke-width=".7"/></svg>
  </div>
</div>
</body>
</html>
```
FILE: styles.css
```css
* { box-sizing: border-box; }
html, body { height: 100%; }
body {
  margin: 0;
  display: flex;
  flex-direction: column;
  overflow: hidden;
  background: #f0f0f0;
  color: #222;
  font: 6px/8px "Liberation Sans", "Noto Sans CJK SC", sans-serif;
}
button, input { margin: 0; padding: 0; border: 0; background: none; color: inherit; font: inherit; }
button { display: flex; align-items: center; justify-content: center; white-space: nowrap; }
svg { display: block; flex: none; width: 8px; height: 8px; }
i { font-style: normal; }
.defs { position: absolute; width: 0; height: 0; }
.off { opacity: .35; }

/* dropdown marks */
.more::after, .dot::after {
  content: "";
  width: 2px;
  height: 1px;
  margin-left: 2px;
  background: #222;
}
.dot { display: flex; align-items: center; }
.dot::after { margin: 0; height: 2px; }

/* title bar */
.titlebar { display: flex; align-items: center; height: 12px; flex: none; background: #829db4; color: #f4f8fb; }
.logo { width: 9px; height: 9px; margin: 0 4px 0 2px; }
.quick { display: flex; align-items: center; justify-content: space-between; width: 130px; height: 12px; padding: 0 1px; background: #bccbdb; }
.menu { display: flex; gap: 7px; margin-left: 6px; font-size: 5px; }
.hover { position: relative; }
.cursor { position: absolute; left: -4px; top: 6px; width: 7px; height: 10px; z-index: 2; }
.doc { flex: 1; text-align: center; }
.find { display: flex; align-items: center; width: 30px; height: 10px; padding: 0 2px; background: #fff; color: #111; }
.find input { flex: 1; min-width: 0; font-style: italic; }
.winbtns { display: flex; gap: 5px; padding: 0 2px; }

/* ribbon */
.ribbon { display: flex; height: 36px; flex: none; padding-left: 4px; background: linear-gradient(#eef2f6, #e3e9ef); border-bottom: 1px solid #f8f8f8; }
.group { display: grid; align-items: start; padding-top: 3px; }
.grip { width: 3px; height: 9px; background: radial-gradient(circle, #9aacbb 40%, transparent 50%) 0 0 / 2px 2px; }
.tool { position: relative; flex-direction: column; justify-content: flex-start; width: 100%; height: 31px; font-size: 5px; line-height: 8px; }
.tool svg { width: 13px; height: 14px; }
.drop::after { content: ""; width: 2px; height: 1px; margin-top: 6px; background: #222; }
.g1 { grid-template-columns: 5px 16px 16px 16px 18px 22px 22px 22px 10px 18px 4px; }
.g2 { grid-template-columns: 5px 16px 16px 16px 18px 16px 24px 14px 24px 18px 20px 36px 3px; }
.g3 { grid-template-columns: 5px 14px 24px 16px 16px 4px 16px 5px; }
.g4 { grid-template-columns: 5px 16px 6px 16px 5px 16px 7px; grid-template-rows: 15px 15px; }
.g5 { grid-template-columns: 5px 22px 16px 7px; }
.g6 { grid-template-columns: 5px 15px 6px; }
.g7 { grid-template-columns: 5px 15px 10px 10px 10px 5px; }
.g8 { grid-template-columns: 5px 17px 4px; }
.g9 { grid-template-columns: 5px 16px 16px 7px; }
.g10 { grid-template-columns: 5px 28px 9px 10px 10px; }
.g3 .dot, .g4 .dot { height: 14px; }
.cell { height: 14px; }
.cell svg, .stack svg { width: 12px; height: 12px; }
.low { grid-column: 2; }
.stack { display: grid; grid-auto-rows: 15px; justify-items: center; }
.stack button { width: 15px; height: 15px; }
.stack .active { background: #f8c98c; border: 1px solid #eda95a; }
.stack.mini { grid-auto-rows: 10px; }
.stack.mini button { width: 9px; height: 9px; }
.stack.mini svg { width: 8px; height: 8px; }
.stack .letter { font: italic bold 11px/12px "Liberation Serif", serif; }
.stack .current { background: #0000e8; border: 1px solid #6d7bce; }
.swatches { display: grid; grid-template-columns: repeat(4, 6px); grid-auto-rows: 6px; gap: 1px; padding-top: 1px; }
.c1 { background: #f00000; } .c2 { background: #fff200; } .c3 { background: #0000f0; } .c4 { background: #00dc20; }
.c5 { background: #00f4f4; } .c6 { background: #f000f0; } .c7 { background: #fff; } .c8 { background: #080808; }
.c9 { background: #f7f1e7; } .c10 { background: #f6d2c8; } .c11 { background: #f9e6bf; } .c12 { background: #f4efc0; }
.c13 { background: #cfeee3; } .c14 { background: #d6f1c5; } .c15 { background: #f4f5cf; } .c16 { background: #cfd3f2; }
.docbtns { display: flex; flex-direction: column; margin-left: auto; padding: 1px 3px; color: #4d7093; }
.docbtns svg { width: 7px; }

/* work area */
.work { flex: 1; min-height: 0; display: flex; border-top: 1px solid #a5a9ad; }
.side { display: flex; flex-direction: column; width: 142px; padding: 0 3px 0 2px; flex: none; }
.side h2 { display: flex; align-items: center; gap: 1px; height: 10px; margin: 0; padding: 0 2px; background: #bccbd9; font: inherit; color: #111; }
.side h2 svg:first-of-type { margin-left: auto; }
.side h2 svg { width: 6px; height: 6px; }
.wizard { height: 88px; flex: none; }
.feature { display: flex; align-items: center; gap: 3px; height: 13px; padding-left: 2px; }
.steps { width: 60px; margin-left: 1px; border: 1px solid #aaa; background: #e3e3e3; }
.step { display: flex; align-items: center; height: 19px; }
.step + .step { border-top: 1px solid #aaa; }
.step b { display: flex; align-items: center; justify-content: center; width: 8px; height: 100%; background: #bdf5bd; color: #1d8a37; font: 5px/6px "Noto Sans CJK SC", sans-serif; writing-mode: vertical-rl; }
.dim b { color: #76b380; }
.step button { width: 12px; height: 12px; }
.step .on { border: 1px solid #bbb; background: #eee; }
.confirm { display: flex; align-items: center; gap: 4px; height: 15px; padding-left: 1px; }
.confirm svg { width: 9px; height: 9px; }
.confirm .more { margin-right: 7px; }
.features { flex: 1; min-height: 0; display: flex; flex-direction: column; background: #fff; }
.search { display: flex; align-items: center; gap: 5px; height: 11px; background: #f0f0f0; font-size: 6px; }
.search label { display: flex; align-items: center; width: 99px; height: 10px; padding: 0 2px; background: #fff; border: 1px solid #888; }
.search input { flex: 1; min-width: 0; height: 8px; font-style: italic; }
.search input::placeholder { color: #777; opacity: 1; }
.search svg { width: 6px; height: 6px; }
.search button { width: 4px; color: #555; }
.colhead { height: 9px; margin: 1px 1px 0; padding-left: 2px; background: #f3f3f3; border: 1px solid #ddd; line-height: 7px; }
.tree { display: grid; grid-auto-rows: 1fr; height: 111px; margin: 0; padding: 0 1px 0 10px; list-style: none; line-height: 8px; }
.tree li { position: relative; display: flex; align-items: center; gap: 1px; padding-left: 8px; border-left: 1px dotted #bbb; }
.tree li::before { content: ""; position: absolute; left: 0; top: 4px; width: 4px; border-top: 1px dotted #bbb; }
.tree .sub { padding-left: 20px; }
.tree .sub::before { left: 13px; height: 8px; top: 0; border-top: 0; border-left: 1px dotted #bbb; }
.exp { position: absolute; left: -3px; top: 2px; z-index: 1; width: 5px; height: 5px; border: 1px solid #ccc; background: #fff; font-size: 5px; line-height: 3px; text-align: center; }
.tree .bare { left: 3px; border: 0; font-size: 6px; }
.sel span { flex: 1; height: 9px; border: 1px solid #777; background: #b0b0b0; line-height: 7px; }
.tabs { display: flex; height: 11px; flex: none; align-items: center; }
.tabs button { height: 11px; padding: 0 5px; }
.tabs .on { background: #fafafa; }

/* viewport */
.view { flex: 1; min-width: 0; display: grid; grid-template: minmax(0, 1fr) / minmax(0, 1fr); border: solid #85898c; border-width: 0 0 0 1px; background: #e4e4e4; }
.scene, .overlay { grid-area: 1 / 1; }
.scene { width: 100%; height: 100%; }
.ucs { font-size: 7px; fill: #cb3550; }
.axes { font-size: 6px; }
.overlay { z-index: 1; padding: 5px 18px; }
.viewbar { display: flex; align-items: center; height: 12px; padding-left: 96px; }
.set { display: flex; gap: 1px; width: 75px; }
.s2 { width: 99px; }
.set button { height: 10px; }
.set:not(.s3) .more::after { margin-left: 1px; margin-right: 1px; }
.s3 { width: auto; gap: 0; }
.s3 button { width: 10px; }
.hot { background: #f8c787; }
.exact { width: 24px; height: 11px; margin-top: 5px; border: 1px solid #555; background: #f2f2f2; color: #111; }

/* right rail */
.rail { display: flex; flex-direction: column; align-items: center; gap: 7px; width: 22px; flex: none; border-left: 2px solid #f8f8f8; background: #e9eef2; }
.rail svg { width: 12px; height: 12px; }
.rail button { flex-direction: column; justify-content: flex-start; height: 13px; }
.rail .drop::after { margin-top: 2px; flex: none; }
.railgrip { width: 14px; height: 4px; margin-bottom: -3px; background: radial-gradient(circle, #b5bfc7 40%, transparent 50%) 0 0 / 2px 2px; }

/* output and status */
.output { height: 11px; flex: none; padding-left: 2px; }
.output button { height: 11px; padding: 0 3px; background: #fafafa; font-weight: bold; }
.status { display: grid; grid-template-columns: 1fr 82px 46px 46px 46px 90px 32px 26px; column-gap: 1px; height: 11px; flex: none; line-height: 10px; }
.status span { border: solid #bbb; border-width: 1px 1px 0; padding-left: 1px; white-space: nowrap; }
.status .msg { border: 0; }

/* taskbar */
.taskbar { display: flex; justify-content: space-between; height: 18px; flex: none; background: #2d2d2d; color: #fff; }
.apps { display: flex; }
.apps button { width: 22px; height: 18px; border-bottom: 1px solid transparent; }
.apps svg { width: 12px; height: 12px; }
.apps .run { border-bottom-color: #87c5da; }
.apps .focus { background: #555; }
.tray { display: flex; align-items: center; gap: 1px; padding-right: 10px; }
.tray svg { width: 10px; height: 10px; }
.mem { width: 37px; height: 9px; background: linear-gradient(90deg, #8fe344 20%, #a9aaa9 20%); color: #444; text-align: center; line-height: 9px; font-size: 5px; }
.badge { width: 8px; height: 8px; margin: 0 1px; border-radius: 50%; background: #050505; color: #f1d45b; text-align: center; }
.ime { width: 9px; text-align: center; }
.box { width: 7px; height: 8px; margin-left: 4px; background: #eee; color: #222; font-size: 5px; }
.clock { width: 36px; margin-left: 2px; text-align: center; line-height: 8px; }
.tray .chat { margin: 0; }
```
